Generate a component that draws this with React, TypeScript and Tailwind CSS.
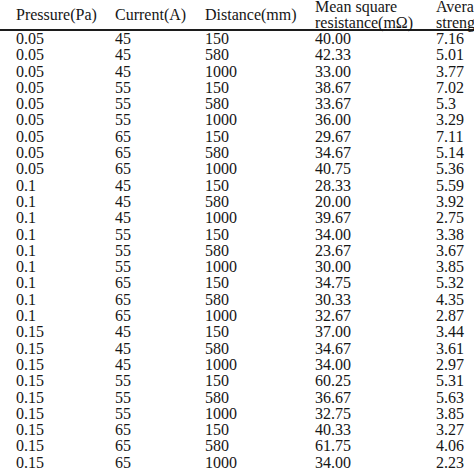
import React from 'react';

type Row = [string, string, string, string, string];

const rows: Row[] = [
    ['0.05', '45', '150', '40.00', '7.16'],
    ['0.05', '45', '580', '42.33', '5.01'],
    ['0.05', '45', '1000', '33.00', '3.77'],
    ['0.05', '55', '150', '38.67', '7.02'],
    ['0.05', '55', '580', '33.67', '5.3'],
    ['0.05', '55', '1000', '36.00', '3.29'],
    ['0.05', '65', '150', '29.67', '7.11'],
    ['0.05', '65', '580', '34.67', '5.14'],
    ['0.05', '65', '1000', '40.75', '5.36'],
    ['0.1', '45', '150', '28.33', '5.59'],
    ['0.1', '45', '580', '20.00', '3.92'],
    ['0.1', '45', '1000', '39.67', '2.75'],
    ['0.1', '55', '150', '34.00', '3.38'],
    ['0.1', '55', '580', '23.67', '3.67'],
    ['0.1', '55', '1000', '30.00', '3.85'],
    ['0.1', '65', '150', '34.75', '5.32'],
    ['0.1', '65', '580', '30.33', '4.35'],
    ['0.1', '65', '1000', '32.67', '2.87'],
    ['0.15', '45', '150', '37.00', '3.44'],
    ['0.15', '45', '580', '34.67', '3.61'],
    ['0.15', '45', '1000', '34.00', '2.97'],
    ['0.15', '55', '150', '60.25', '5.31'],
    ['0.15', '55', '580', '36.67', '5.63'],
    ['0.15', '55', '1000', '32.75', '3.85'],
    ['0.15', '65', '150', '40.33', '3.27'],
    ['0.15', '65', '580', '61.75', '4.06'],
    ['0.15', '65', '1000', '34.00', '2.23'],
];

const cols = 'grid grid-cols-[115px_90px_110px_121px_200px] pl-[16px]';

const App: React.FC = () => {
    return (
        <div className="w-[474px] h-[474px] overflow-hidden bg-white text-[#161616] font-['Liberation_Serif',serif] text-[16px] leading-[16.3px]">
            <div className="w-[660px] -mt-[1.5px]">
                <div className={`${cols} h-[32.5px] items-center border-b-2 border-[#1c1c1c] -ml-0`}>
                    <div>Pressure(Pa)</div>
                    <div className="-ml-[16px]">Current(A)</div>
                    <div className="-ml-[16px]">Distance(mm)</div>
                    <div className="-ml-[16px]">
                        <div>Mean square</div>
                        <div>resistance(mΩ)</div>
                    </div>
                    <div className="-ml-[16px]">
                        <div>Average</div>
                        <div>strength(MPa)</div>
                    </div>
                </div>
                {rows.map((r, i) => (
                    <div key={i} className={cols}>
                        <div>{r[0]}</div>
                        <div className="-ml-[16px]">{r[1]}</div>
                        <div className="-ml-[16px]">{r[2]}</div>
                        <div className="-ml-[16px]">{r[3]}</div>
                        <div className="-ml-[16px]">{r[4]}</div>
                    </div>
                ))}
            </div>
        </div>
    );
};

export default App;
